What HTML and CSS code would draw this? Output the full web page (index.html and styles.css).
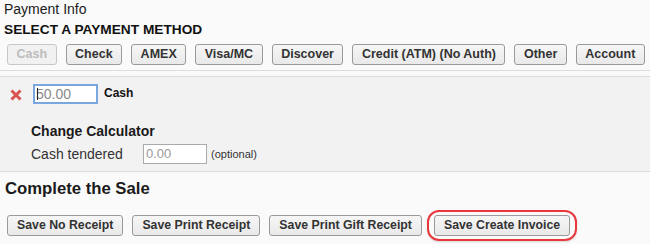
FILE: index.html
```html
<!DOCTYPE html>
<html>
<head>
<meta charset="utf-8">
<link rel="stylesheet" href="styles.css">
</head>
<body>
<div class="page">
  <div class="title">Payment Info</div>
  <div class="subtitle">SELECT A PAYMENT METHOD</div>
  <div class="methods">
    <button class="btn disabled">Cash</button>
    <button class="btn">Check</button>
    <button class="btn">AMEX</button>
    <button class="btn">Visa/MC</button>
    <button class="btn">Discover</button>
    <button class="btn">Credit (ATM) (No Auth)</button>
    <button class="btn">Other</button>
    <button class="btn">Account</button>
  </div>
  <div class="sep"></div>
  <div class="panel">
    <div class="pay-row">
      <svg class="x" width="12" height="12" viewBox="0 0 12 12"><path d="M1.5 1.5L10.5 10.5M10.5 1.5L1.5 10.5" stroke="#d9534f" stroke-width="3" stroke-linecap="butt"/></svg>
      <div class="amount focus"><span class="caret"></span>50.00</div>
      <span class="pay-label">Cash</span>
    </div>
    <div class="calc-title">Change Calculator</div>
    <div class="calc-row">
      <span class="calc-label">Cash tendered</span>
      <div class="amount small">0.00</div>
      <span class="optional">(optional)</span>
    </div>
  </div>
  <div class="complete">Complete the Sale</div>
  <div class="actions">
    <button class="btn">Save No Receipt</button>
    <button class="btn">Save Print Receipt</button>
    <button class="btn">Save Print Gift Receipt</button>
    <span class="highlight"><button class="btn">Save Create Invoice</button></span>
  </div>
</div>
</body>
</html>
```
FILE: styles.css
```css
html, body { margin: 0; padding: 0; }
body {
  background: #fafafa;
  font-family: "Liberation Sans", Arial, sans-serif;
  color: #111;
  width: 650px;
  height: 244px;
  overflow: hidden;
}
.title {
  font-size: 14px;
  padding: 1px 0 0 4px;
  height: 20px;
  line-height: 17px;
  color: #1a1a1a;
}
.subtitle {
  font-size: 13.7px;
  font-weight: bold;
  padding-left: 4px;
  line-height: 18px;
  height: 23px;
}
.methods {
  display: flex;
  gap: 9px;
  padding-left: 7px;
  height: 24px;
}
.btn {
  font-family: "Liberation Sans", Arial, sans-serif;
  font-size: 12.5px;
  font-weight: bold;
  color: #333;
  background: linear-gradient(#f6f6f6, #e9e9e9);
  border: 1px solid #9a9a9a;
  border-radius: 3px;
  height: 21px;
  padding: 0 8.5px;
  margin: 0;
  line-height: 19px;
  white-space: nowrap;
}
.btn.disabled {
  color: #bdbdbd;
  border-color: #c8c8c8;
  background: #f1f1f1;
}
.sep {
  border-top: 1px solid #dcdcdc;
  margin-top: 2px;
  height: 5px;
}
.panel {
  background: #f2f2f2;
  border-top: 1px solid #dcdcdc;
  border-bottom: 1px solid #dcdcdc;
  height: 96px;
  box-sizing: border-box;
  padding: 7px 0 0 10px;
}
.pay-row {
  display: flex;
  align-items: center;
  height: 20px;
}
.x { margin-right: 11px; margin-top: 2px; }
.amount {
  box-sizing: border-box;
  width: 65px;
  height: 20px;
  border: 1px solid #a9a9a9;
  background: #fff;
  font-size: 14px;
  color: #8a8a8a;
  line-height: 18px;
  padding-left: 2px;
  position: relative;
}
.amount.focus {
  border: 2px solid #7ba7e1;
  padding-left: 1px;
  line-height: 16px;
}
.caret {
  position: absolute;
  left: 2px;
  top: 2px;
  width: 1px;
  height: 12px;
  background: #222;
}
.pay-label {
  font-size: 12px;
  font-weight: bold;
  margin-left: 6px;
  margin-top: -2px;
}
.calc-title {
  font-size: 14px;
  font-weight: bold;
  margin: 19px 0 0 21px;
  line-height: 17px;
  color: #1a1a1a;
}
.calc-row {
  display: flex;
  align-items: center;
  margin: 4px 0 0 21px;
}
.calc-label {
  font-size: 14px;
  color: #333;
  width: 112px;
}
.amount.small { width: 64px; height: 20px; border-color: #aaa; color: #999; font-size: 13px; }
.optional { font-size: 11px; color: #333; margin-left: 4px; }
.complete {
  font-size: 16.7px;
  font-weight: bold;
  padding: 7px 0 0 5px;
  line-height: 19px;
  height: 36px;
  box-sizing: border-box;
  color: #1a1a1a;
}
.actions {
  display: flex;
  gap: 9px;
  padding-left: 7px;
  margin-top: 2px;
  align-items: center;
}
.actions .btn { font-size: 12.3px; padding: 0 9px; }
.highlight {
  margin-left: -4px;
  padding: 3px 5px;
  border: 2px solid #e8383d;
  border-radius: 12px;
  display: flex;
  box-shadow: 0 1px 2px rgba(0,0,0,0.15);
}
```
